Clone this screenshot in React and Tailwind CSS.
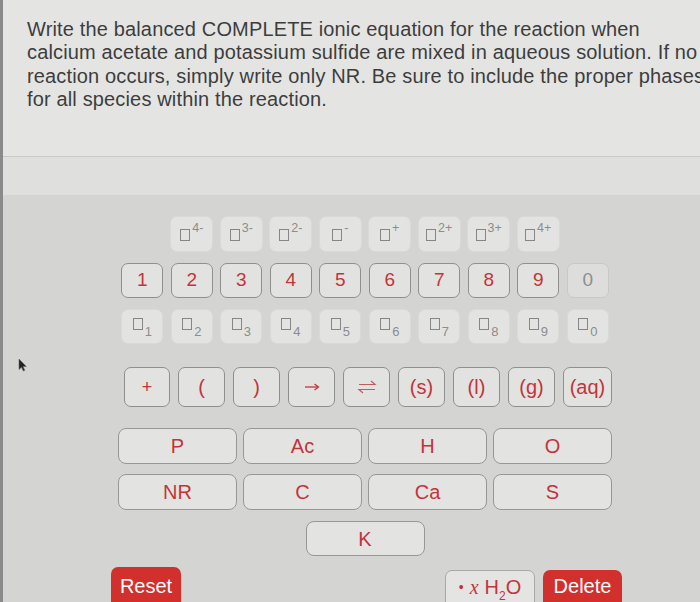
import React from 'react';

function Box() {
  return <span className="inline-block w-[10px] h-[12px] border border-[#868686]" />;
}

const charges = ['4-', '3-', '2-', '-', '+', '2+', '3+', '4+'];
const nums = ['1', '2', '3', '4', '5', '6', '7', '8', '9'];
const subs = ['1', '2', '3', '4', '5', '6', '7', '8', '9', '0'];

export default function App() {
  return (
    <div className="relative w-[700px] h-[602px] overflow-hidden border-l-[3px] border-[#8a8a8a] bg-[#d4d5d3] font-['Liberation_Sans',Arial,sans-serif]">
      {/* Question */}
      <div className="h-[157px] bg-[#e4e5e3] border-b border-[#c9cac8] pt-[18px] pl-[24px] text-[20px] leading-[23.3px] tracking-[0.15px] text-[#3d3d3d] whitespace-nowrap overflow-hidden">
        <div>Write the balanced COMPLETE ionic equation for the reaction when</div>
        <div>calcium acetate and potassium sulfide are mixed in aqueous solution. If no</div>
        <div>reaction occurs, simply write only NR. Be sure to include the proper phases</div>
        <div>for all species within the reaction.</div>
      </div>
      <div className="h-[38px] bg-[#dfe0de]" />

      {/* Palette */}
      <div className="ml-[114px] w-[496px] flex flex-col items-center">
        {/* charges */}
        <div className="mt-[21px] flex gap-[6.5px]">
          {charges.map((c) => (
            <div key={c} className="w-[43px] h-[36px] rounded-[7px] bg-[#e3e4e2] border border-[#d9dad8] flex items-center justify-center">
              <span className="mt-[3px]"><Box /></span>
              <span className="self-start mt-[5px] ml-[2px] text-[12.5px] leading-[12px] text-[#8c8c8c]">{c}</span>
            </div>
          ))}
        </div>

        {/* numbers */}
        <div className="mt-[11px] flex gap-[7.5px]">
          {nums.map((n) => (
            <div key={n} className="w-[42px] h-[35px] rounded-[7px] bg-[#e2e3e1] border border-[#8f8f8f] flex items-center justify-center text-[19px] text-[#c2343b]">
              {n}
            </div>
          ))}
          <div className="w-[42px] h-[35px] rounded-[7px] bg-[#dddedc] border border-[#c8c9c7] flex items-center justify-center text-[19px] text-[#8e8e8e]">
            0
          </div>
        </div>

        {/* subscripts */}
        <div className="mt-[11px] flex gap-[7.5px]">
          {subs.map((s) => (
            <div key={s} className="w-[42px] h-[35px] rounded-[7px] bg-[#e3e4e2] border border-[#d9dad8] flex items-center justify-center">
              <span className="-mt-[3px]"><Box /></span>
              <span className="self-end mb-[5px] ml-[2px] text-[13px] leading-[13px] text-[#8c8c8c]">{s}</span>
            </div>
          ))}
        </div>

        {/* symbols */}
        <div className="mt-[23px] pl-[6px] flex gap-[8px]">
          <div className="w-[46px] h-[40px] rounded-[7px] bg-[#e2e3e1] border border-[#8f8f8f] flex items-center justify-center text-[18px] text-[#c2343b]">+</div>
          <div className="w-[47px] h-[40px] rounded-[7px] bg-[#e2e3e1] border border-[#8f8f8f] flex items-center justify-center text-[20px] text-[#c2343b]">(</div>
          <div className="w-[47px] h-[40px] rounded-[7px] bg-[#e2e3e1] border border-[#8f8f8f] flex items-center justify-center text-[20px] text-[#c2343b]">)</div>
          <div className="w-[47px] h-[40px] rounded-[7px] bg-[#e2e3e1] border border-[#8f8f8f] flex items-center justify-center text-[#c2343b]">
            <svg width="16" height="10" viewBox="0 0 16 10" fill="none" stroke="#c2343b" strokeWidth="1.3">
              <path d="M1 5 H14" />
              <path d="M10.5 2 L14.5 5 L10.5 8" />
            </svg>
          </div>
          <div className="w-[47px] h-[40px] rounded-[7px] bg-[#e2e3e1] border border-[#8f8f8f] flex items-center justify-center">
            <svg width="20" height="14" viewBox="0 0 20 14" fill="none" stroke="#c25a60" strokeWidth="1.2">
              <path d="M2 4.5 H18 L14 1" />
              <path d="M18 9.5 H2 L6 13" />
            </svg>
          </div>
          <div className="w-[47px] h-[40px] rounded-[7px] bg-[#e2e3e1] border border-[#8f8f8f] flex items-center justify-center text-[20px] text-[#c2343b]">(s)</div>
          <div className="w-[47px] h-[40px] rounded-[7px] bg-[#e2e3e1] border border-[#8f8f8f] flex items-center justify-center text-[20px] text-[#c2343b]">(l)</div>
          <div className="w-[47px] h-[40px] rounded-[7px] bg-[#e2e3e1] border border-[#8f8f8f] flex items-center justify-center text-[20px] text-[#c2343b]">(g)</div>
          <div className="w-[49px] h-[40px] rounded-[7px] bg-[#e2e3e1] border border-[#8f8f8f] flex items-center justify-center text-[20px] text-[#c2343b]">(aq)</div>
        </div>

        {/* elements */}
        <div className="mt-[21px] grid grid-cols-4 gap-x-[6px] gap-y-[10px]">
          {['P', 'Ac', 'H', 'O', 'NR', 'C', 'Ca', 'S'].map((e) => (
            <div key={e} className="w-[119px] h-[36px] rounded-[8px] bg-[#e3e4e2] border border-[#979797] flex items-center justify-center text-[20px] text-[#c2343b]">
              {e}
            </div>
          ))}
        </div>
        <div className="mt-[11px] w-[119px] h-[35px] rounded-[8px] bg-[#e3e4e2] border border-[#979797] flex items-center justify-center text-[20px] text-[#c2343b]">
          K
        </div>
      </div>

      {/* bottom actions */}
      <div className="mt-[11px] ml-[108px] w-[511px] flex justify-between items-start">
        <div className="w-[70px] h-[40px] rounded-t-[7px] bg-[#d2302c] pt-[7px] text-center text-[20px] leading-[24px] text-white">
          Reset
        </div>
        <div className="mt-[3px] flex gap-[8px]">
          <div className="w-[90px] h-[40px] rounded-t-[7px] bg-[#e4e5e3] border border-[#a9aaa8] pt-[4px] flex justify-center items-start text-[20px] leading-[24px] text-[#c2343b]">
            <span className="text-[14px] mr-[6px]">•</span>
            <span className="font-['Liberation_Serif',serif] italic mr-[6px]">x</span>
            <span>H</span>
            <span className="text-[12px] leading-[12px] mt-[15px]">2</span>
            <span>O</span>
          </div>
          <div className="w-[79px] h-[40px] rounded-t-[7px] bg-[#d2302c] pt-[4px] text-center text-[20px] leading-[24px] text-white">
            Delete
          </div>
        </div>
      </div>

      {/* mouse cursor */}
      <svg className="absolute left-[15px] top-[358px]" width="9" height="14" viewBox="0 0 9 14">
        <path d="M1 1 L1 11.5 L3.5 9.2 L5.3 13 L6.8 12.3 L5 8.6 L8.3 8.5 Z" fill="#222" stroke="#666" strokeWidth="0.6" />
      </svg>
    </div>
  );
}
